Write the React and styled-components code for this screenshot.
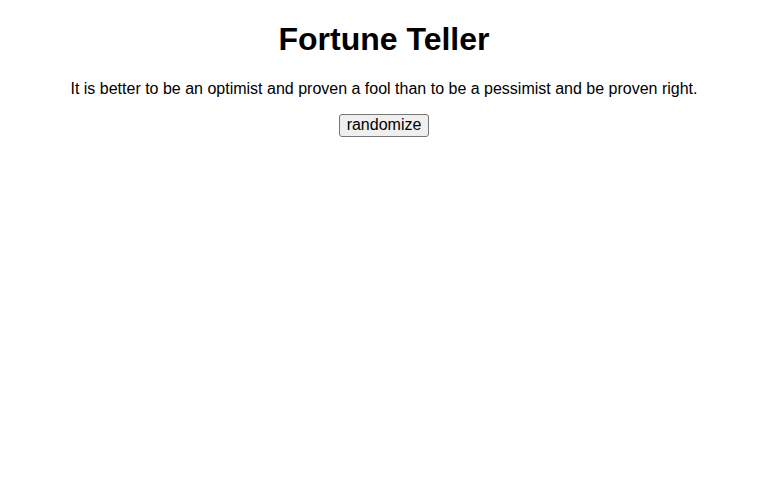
import React, { useState } from "react";
import styled, { createGlobalStyle } from "styled-components";

const GlobalStyle = createGlobalStyle`
  body {
    margin: 0;
    background: #ffffff;
    color: #000000;
    font-family: "Liberation Sans", Arial, sans-serif;
  }
`;

const Page = styled.main`
  text-align: center;
  padding: 0 8px;
`;

const Title = styled.h1`
  font-size: 32px;
  font-weight: bold;
  margin: 21.44px 0;
`;

const Fortune = styled.p`
  font-size: 16px;
  margin: 16px 0;
`;

const Actions = styled.div`
  display: flex;
  justify-content: center;
`;

const Button = styled.button`
  font-family: "Liberation Sans", Arial, sans-serif;
  font-size: 16px;
  line-height: normal;
  color: #000000;
  background: #efefef;
  border: 1px solid #767676;
  border-radius: 3px;
  padding: 1.5px 7px;
  cursor: pointer;

  &:hover {
    background: #e5e5e5;
  }
`;

const fortunes = [
  "It is better to be an optimist and proven a fool than to be a pessimist and be proven right.",
  "A journey of a thousand miles begins with a single step.",
  "Fortune favors the bold.",
  "Your hard work will soon pay off.",
];

export default function App() {
  const [index, setIndex] = useState(0);

  const randomize = () => {
    let next = index;
    while (next === index) {
      next = Math.floor(Math.random() * fortunes.length);
    }
    setIndex(next);
  };

  return (
    <>
      <GlobalStyle />
      <Page>
        <Title>Fortune Teller</Title>
        <Fortune>{fortunes[index]}</Fortune>
        <Actions>
          <Button type="button" onClick={randomize}>
            randomize
          </Button>
        </Actions>
      </Page>
    </>
  );
}
